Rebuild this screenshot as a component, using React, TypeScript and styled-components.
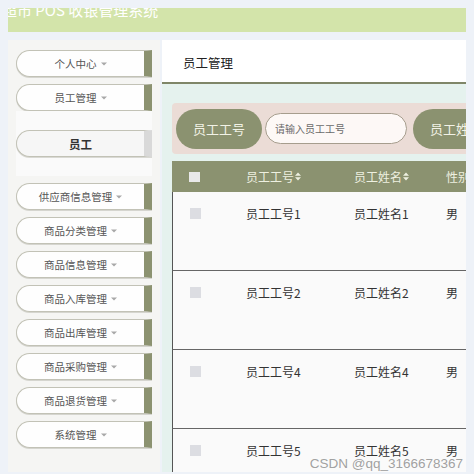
import React, { FC } from "react";
import styled, { createGlobalStyle } from "styled-components";

const GlobalStyle = createGlobalStyle`
  body {
    margin: 8px;
    background: #eef2f8;
    font-family: "Noto Sans CJK SC", "Noto Sans", sans-serif;
    overflow: hidden;
  }
`;

const menus = [
    "供应商信息管理",
    "商品分类管理",
    "商品信息管理",
    "商品入库管理",
    "商品出库管理",
    "商品采购管理",
    "商品退货管理",
    "系统管理",
];

const rows = [
    { no: "员工工号1", name: "员工姓名1", sex: "男" },
    { no: "员工工号2", name: "员工姓名2", sex: "男" },
    { no: "员工工号4", name: "员工姓名4", sex: "男" },
    { no: "员工工号5", name: "员工姓名5", sex: "男" },
];

const Caret: FC = () => (
    <svg width="6" height="4" viewBox="0 0 6 4" style={{ marginLeft: 4 }}>
        <path d="M0 0.5h6L3 3.5z" fill="#a8a8a8" />
    </svg>
);

const Sort: FC = () => (
    <svg width="6" height="9" viewBox="0 0 6 9" style={{ marginLeft: 1 }}>
        <path d="M0 3.8L3 0.5l3 3.3z M0 5.2l3 3.3 3-3.3z" fill="#eef0e0" />
    </svg>
);

export default function App() {
    return (
        <>
            <GlobalStyle />
            <Page>
                <TopBar>
                    <Title>超市 POS 收银管理系统</Title>
                </TopBar>
                <Body>
                    <Sidebar>
                        <MenuItem>
                            个人中心
                            <Caret />
                        </MenuItem>
                        <MenuItem>
                            员工管理
                            <Caret />
                        </MenuItem>
                        <SubMenu>
                            <MenuItem $sub>员工</MenuItem>
                        </SubMenu>
                        {menus.map((m) => (
                            <MenuItem key={m}>
                                {m}
                                <Caret />
                            </MenuItem>
                        ))}
                    </Sidebar>
                    <Main>
                        <PanelHead>员工管理</PanelHead>
                        <Content>
                            <SearchBar>
                                <SearchLabel>员工工号</SearchLabel>
                                <SearchInput placeholder="请输入员工工号" />
                                <SearchLabel $gap>员工姓名</SearchLabel>
                            </SearchBar>
                            <Table>
                                <HeadRow>
                                    <CheckCell>
                                        <Check $head />
                                    </CheckCell>
                                    <Cell>
                                        员工工号
                                        <Sort />
                                    </Cell>
                                    <Cell>
                                        员工姓名
                                        <Sort />
                                    </Cell>
                                    <Cell>性别</Cell>
                                </HeadRow>
                                {rows.map((r) => (
                                    <Row key={r.no}>
                                        <CheckCell>
                                            <Check />
                                        </CheckCell>
                                        <Cell>{r.no}</Cell>
                                        <Cell>{r.name}</Cell>
                                        <Cell>{r.sex}</Cell>
                                    </Row>
                                ))}
                            </Table>
                        </Content>
                    </Main>
                </Body>
                <Watermark>CSDN @qq_3166678367</Watermark>
            </Page>
        </>
    );
}

const Page = styled.div`
  height: 464px;
  display: flex;
  flex-direction: column;
`;

const TopBar = styled.div`
  height: 24px;
  flex-shrink: 0;
  margin-bottom: 8px;
  background: #d3e4aa;
  display: flex;
  align-items: flex-start;
  overflow: visible;
`;

const Title = styled.div`
  margin: -7px 0 0 -6px;
  font-size: 15px;
  line-height: 18px;
  color: #ffffff;
  white-space: nowrap;
`;

const Body = styled.div`
  flex: 1;
  min-height: 0;
  display: flex;
  gap: 2px;
`;

const Sidebar = styled.div`
  width: 152px;
  flex-shrink: 0;
  box-sizing: border-box;
  padding: 10px 8px 0 8px;
  background: #f5f5f3;
  display: flex;
  flex-direction: column;
  gap: 7px;
  overflow: hidden;
`;

const MenuItem = styled.div<{ $sub?: boolean }>`
  height: 27px;
  flex-shrink: 0;
  box-sizing: border-box;
  display: flex;
  align-items: center;
  justify-content: center;
  background: ${(p) => (p.$sub ? "#f6f6f6" : "#fefefe")};
  border: 1px solid #c2c2b6;
  border-right: 8px solid ${(p) => (p.$sub ? "#d9d9d9" : "#8c9270")};
  border-radius: 14px 0 0 14px;
  box-shadow: 0 1px 0 rgba(120, 120, 100, 0.25);
  font-size: ${(p) => (p.$sub ? "11.5px" : "10.5px")};
  font-weight: ${(p) => (p.$sub ? 700 : 400)};
  color: ${(p) => (p.$sub ? "#333" : "#555")};
`;

const SubMenu = styled.div`
  margin-top: -7px;
  padding: 19px 0;
  background: #fafafa;
`;

const Main = styled.div`
  flex: 1;
  min-width: 0;
  background: #e5f2ee;
  display: flex;
  flex-direction: column;
  overflow: hidden;
`;

const PanelHead = styled.div`
  height: 44px;
  flex-shrink: 0;
  box-sizing: border-box;
  display: flex;
  align-items: center;
  padding: 2px 0 0 21px;
  background: #ffffff;
  border-bottom: 2px solid #7f8668;
  font-size: 12.5px;
  color: #222;
`;

const Content = styled.div`
  padding: 19px 0 0 10px;
  overflow: hidden;
`;

const SearchBar = styled.div`
  height: 51px;
  width: 340px;
  display: flex;
  align-items: center;
  gap: 3px;
  padding-left: 4px;
  background: #ebdcd6;
  border-radius: 4px 0 0 4px;
`;

const SearchLabel = styled.div<{ $gap?: boolean }>`
  width: 86px;
  height: 40px;
  flex-shrink: 0;
  margin-left: ${(p) => (p.$gap ? "3px" : "0")};
  display: flex;
  align-items: center;
  justify-content: center;
  border-radius: 20px;
  background: #8b9270;
  color: #f2f2e6;
  font-size: 13px;
`;

const SearchInput = styled.input`
  width: 142px;
  height: 31px;
  flex-shrink: 0;
  box-sizing: border-box;
  padding: 0 9px;
  border: 1px solid #a69d8d;
  border-radius: 16px;
  background: #fdf8f6;
  font-family: inherit;
  font-size: 10px;
  outline: none;
  &::placeholder {
    color: #6a6a6a;
  }
`;

const Table = styled.div`
  margin-top: 7px;
  width: 340px;
`;

const HeadRow = styled.div`
  height: 31px;
  display: grid;
  grid-template-columns: 74px 108px 92px 66px;
  align-items: center;
  background: #8b9270;
  color: #eef0e0;
  font-size: 12px;
`;

const Row = styled.div`
  height: 79px;
  box-sizing: border-box;
  display: grid;
  grid-template-columns: 73px 108px 92px 66px;
  align-items: start;
  padding-top: 13px;
  background: #fafafa;
  border-left: 1px solid #555;
  border-bottom: 1px solid #666;
  font-size: 12px;
  color: #333;
  line-height: 17px;
`;

const Cell = styled.div`
  display: flex;
  align-items: center;
  white-space: nowrap;
`;

const CheckCell = styled.div`
  padding-left: 17px;
  display: flex;
  align-items: center;
  height: 17px;
`;

const Check = styled.div<{ $head?: boolean }>`
  width: 11px;
  height: ${(p) => (p.$head ? "10px" : "11px")};
  background: ${(p) => (p.$head ? "#e9e9e9" : "#dcdde2")};
`;

const Watermark = styled.div`
  position: absolute;
  right: 11px;
  bottom: 3px;
  font-family: "Liberation Sans", Arial, sans-serif;
  font-size: 13.5px;
  color: rgba(150, 150, 150, 0.9);
  white-space: nowrap;
`;
